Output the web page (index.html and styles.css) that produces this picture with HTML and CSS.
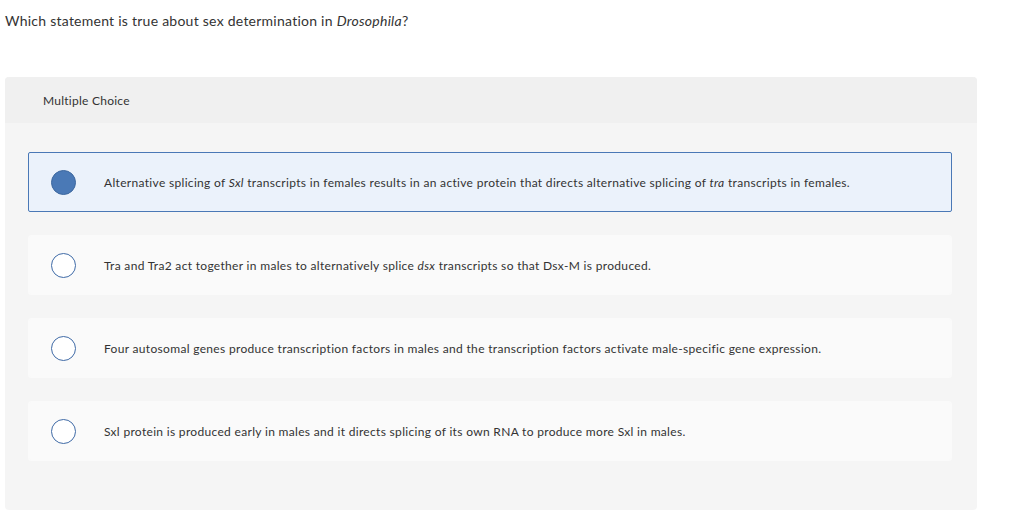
FILE: index.html
```html
<!DOCTYPE html>
<html>
<head>
<meta charset="utf-8">
<link rel="stylesheet" href="styles.css">
</head>
<body>
<p class="question">Which statement is true about sex determination in <i>Drosophila</i>?</p>
<div class="panel">
  <div class="panel-head">Multiple Choice</div>
  <div class="options">
    <div class="option selected">
      <span class="radio"></span>
      <span class="label">Alternative splicing of <i>Sxl</i> transcripts in females results in an active protein that directs alternative splicing of <i>tra</i> transcripts in females.</span>
    </div>
    <div class="option">
      <span class="radio"></span>
      <span class="label">Tra and Tra2 act together in males to alternatively splice <i>dsx</i> transcripts so that Dsx-M is produced.</span>
    </div>
    <div class="option">
      <span class="radio"></span>
      <span class="label">Four autosomal genes produce transcription factors in males and the transcription factors activate male-specific gene expression.</span>
    </div>
    <div class="option">
      <span class="radio"></span>
      <span class="label">Sxl protein is produced early in males and it directs splicing of its own RNA to produce more Sxl in males.</span>
    </div>
  </div>
</div>
</body>
</html>
```
FILE: styles.css
```css
html, body {
  margin: 0;
  padding: 0;
  background: #ffffff;
}
body {
  font-family: Lato, "Liberation Sans", sans-serif;
  color: #333333;
  padding: 0 47px 0 5px;
}
.question {
  margin: 0;
  padding-top: 12px;
  font-size: 14px;
  line-height: 18px;
  letter-spacing: 0.25px;
}
.panel {
  margin-top: 47px;
  width: 972px;
  background: #f5f5f5;
  border-radius: 4px;
  overflow: hidden;
}
.panel-head {
  background: #f0f0f0;
  height: 46px;
  display: flex;
  align-items: center;
  padding-left: 38px;
  font-size: 12px;
  letter-spacing: 0.25px;
}
.options {
  display: flex;
  flex-direction: column;
  gap: 23px;
  padding: 29px 25px 49px 23px;
}
.option {
  height: 60px;
  box-sizing: border-box;
  background: #fafafa;
  border: 1px solid #fafafa;
  border-radius: 3px;
  display: flex;
  align-items: center;
  padding-left: 22px;
}
.option.selected {
  background: #ebf2fb;
  border-color: #4a78b6;
  border-radius: 2px;
}
.radio {
  width: 25px;
  height: 25px;
  box-sizing: border-box;
  border-radius: 50%;
  border: 1.5px solid #3f6aa6;
  background: #ffffff;
  flex: none;
}
.option.selected .radio {
  background: #4a79b6;
  border-color: #3d689f;
}
.label {
  margin-left: 28px;
  font-size: 12px;
  letter-spacing: 0.32px;
}
```
